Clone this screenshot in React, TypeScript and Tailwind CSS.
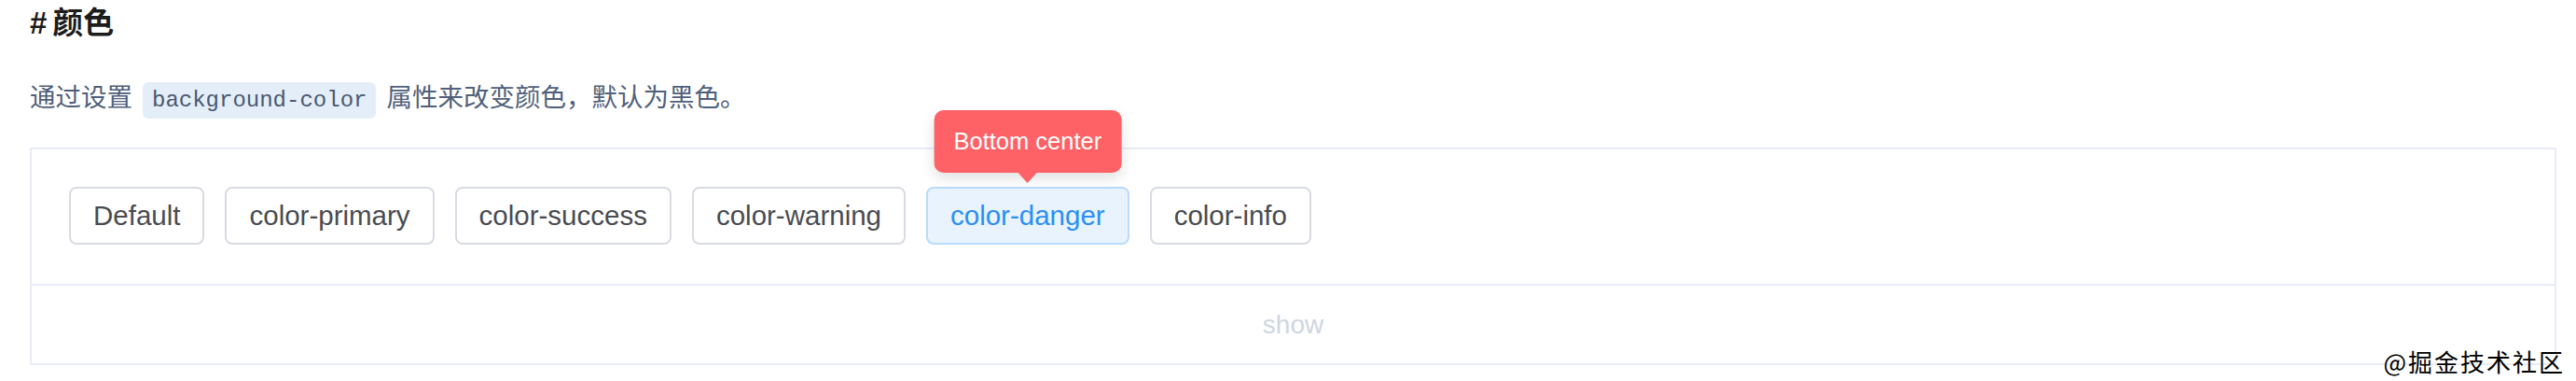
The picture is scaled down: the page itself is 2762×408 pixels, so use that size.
import React from "react";

const buttons = ["Default", "color-primary", "color-success", "color-warning", "color-danger", "color-info"];

const App = () => {
  return (
    <main className="relative h-[408px] w-full overflow-hidden bg-white pl-8 pr-[21px] pt-[4px] font-['Liberation_Sans','Noto_Sans_CJK_SC',sans-serif]">
      <h3 className="text-[33px] font-bold leading-[42px] text-[#1c1c1c]">
        <span className="font-['Liberation_Sans',sans-serif] mr-[6px]">#</span>颜色
      </h3>
      <p className="mt-[34px] text-[27.5px] leading-[44px] text-[#50607a] font-['Noto_Sans_CJK_SC',sans-serif]">
        通过设置
        <code className="mx-[11px] inline-block rounded-md bg-[#e4eef9] px-[10px] font-['Liberation_Mono',monospace] text-[24px] leading-[39px] text-[#4a5870]">
          background-color
        </code>
        属性来改变颜色，默认为黑色。
      </p>

      <div className="mt-[31px] border-2 border-[#e9ecf8]">
        <div className="flex gap-[22px] px-10 pt-10 pb-[42px]">
          {buttons.map((b) => {
            const active = b === "color-danger";
            return (
              <div key={b} className="relative">
                <button
                  className={
                    active
                      ? "h-[62px] rounded-lg border-2 border-[#b9dbfb] bg-[#e8f3fe] px-6 text-[29.5px] text-[#2b8ff5]"
                      : "h-[62px] rounded-lg border-2 border-[#d8dbe2] bg-white px-6 text-[29.5px] text-[#4a4b51]"
                  }
                >
                  {b}
                </button>
                {active && (
                  <div className="absolute bottom-full left-1/2 mb-[15px] -translate-x-1/2 whitespace-nowrap rounded-[10px] bg-[#fe6266] px-[21px] text-[25.5px] leading-[67px] text-white shadow-[0_6px_14px_rgba(0,0,0,0.12)]">
                    Bottom center
                    <span className="absolute left-1/2 top-full -translate-x-1/2 border-x-[10px] border-t-[11px] border-x-transparent border-t-[#fe6266]" />
                  </div>
                )}
              </div>
            );
          })}
        </div>
        <div className="flex h-[85px] items-center justify-center border-t-2 border-[#e9ecf8] text-[28px] text-[#cdd6e2]">
          show
        </div>
      </div>

      <div className="absolute bottom-[8px] right-[12px] text-[26px] leading-none tracking-[2px] text-black font-['Noto_Sans_CJK_SC',sans-serif] [text-shadow:0_0_2px_#fff]">
        @掘金技术社区
      </div>
    </main>
  );
};

export default App;
